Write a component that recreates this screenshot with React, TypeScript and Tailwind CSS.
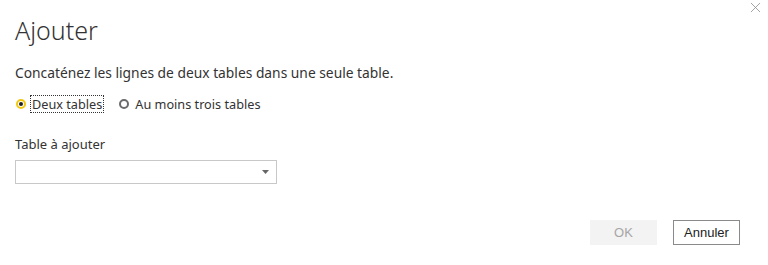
import { X } from "lucide-react";

const font = { fontFamily: '"Noto Sans", "Open Sans", sans-serif' };

const Radio = ({ checked, label, focused }: { checked?: boolean; label: string; focused?: boolean }) => (
  <label className="flex items-center gap-[4px] cursor-pointer">
    <span
      className={
        checked
          ? "w-[10px] h-[10px] rounded-full border-2 border-[#f2c811] flex items-center justify-center"
          : "w-[10px] h-[10px] rounded-full border-2 border-[#6b6b6b]"
      }
    >
      {checked && <span className="w-[4px] h-[4px] rounded-full bg-[#222]" />}
    </span>
    <span
      className={
        focused
          ? "border border-dotted border-[#333] px-[1px] leading-[16px] text-[12.7px] text-[#333]"
          : "border border-transparent px-[1px] leading-[16px] text-[12.7px] text-[#333]"
      }
    >
      {label}
    </span>
  </label>
);

export default function App() {
  return (
    <div className="relative w-[768px] h-[265px] bg-white overflow-hidden" style={font}>
      <button className="absolute right-[4px] top-[-1px] text-[#8a8a8a]">
        <X className="w-[17px] h-[17px]" strokeWidth={1.1} />
      </button>
      <div className="flex flex-col px-[15px]">
        <h1 className="mt-[13px] text-[25px] font-light leading-[34px] text-[#333]">Ajouter</h1>
        <p className="mt-[17px] text-[13.8px] leading-[18px] text-[#333]">
          Concaténez les lignes de deux tables dans une seule table.
        </p>
        <div className="mt-[13px] flex items-center gap-[15px] pl-[1px]">
          <Radio checked focused label="Deux tables" />
          <Radio label="Au moins trois tables" />
        </div>
        <label className="mt-[22px] text-[13px] leading-[18px] text-[#333]">Table à ajouter</label>
        <div className="mt-[7px] w-[262px] h-[24px] border border-[#c8c8c8] flex items-center justify-end pr-[7px]">
          <svg width="7" height="4" viewBox="0 0 7 4">
            <path d="M0 0h7L3.5 4z" fill="#666" />
          </svg>
        </div>
        <div className="mt-[36px] flex justify-end gap-[16px] pr-[13px]" style={{ fontFamily: '"Liberation Sans", Arial, sans-serif' }}>
          <button className="w-[67px] h-[25px] bg-[#f3f3f3] text-[13px] text-[#a6a6a6]">OK</button>
          <button className="w-[67px] h-[25px] border-[1.5px] border-[#8a8a8a] bg-white text-[13px] text-[#222]">
            Annuler
          </button>
        </div>
      </div>
    </div>
  );
}
